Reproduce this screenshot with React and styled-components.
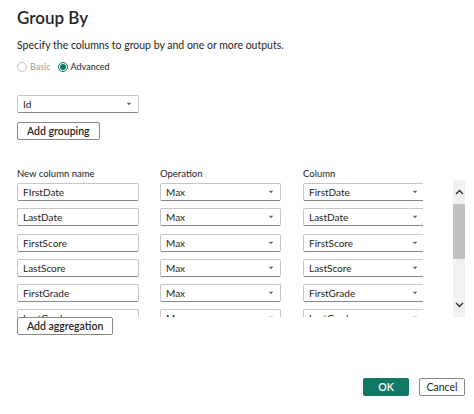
import styled, { createGlobalStyle } from "styled-components";

const GlobalStyle = createGlobalStyle`
  html, body {
    margin: 0;
    padding: 0;
    background: #ffffff;
  }
  body {
    font-family: Lato, "Open Sans", sans-serif;
    color: #252423;
  }
`;

const aggregations = [
  { name: "FIrstDate", column: "FirstDate" },
  { name: "LastDate", column: "LastDate" },
  { name: "FirstScore", column: "FirstScore" },
  { name: "LastScore", column: "LastScore" },
  { name: "FirstGrade", column: "FirstGrade" },
  { name: "LastGrade", column: "LastGrade" },
];

const Caret = () => (
  <svg width="6" height="4" viewBox="0 0 6 4">
    <path d="M0.8 0.8 L5.2 0.8 L3 3.2 Z" fill="#605e5c" />
  </svg>
);

const Chevron = ({ up }) => (
  <svg width="9" height="6" viewBox="0 0 9 6">
    <path
      d={up ? "M1 5 L4.5 1.5 L8 5" : "M1 1 L4.5 4.5 L8 1"}
      fill="none"
      stroke="#333"
      strokeWidth="1.4"
    />
  </svg>
);

const Select = ({ value, width }) => (
  <SelectBox $width={width}>
    <span>{value}</span>
    <Caret />
  </SelectBox>
);

const App = () => {
  return (
    <>
      <GlobalStyle />
      <Dialog>
        <Title>Group By</Title>
        <Description>
          Specify the columns to group by and one or more outputs.
        </Description>
        <RadioGroup>
          <RadioOption $disabled>
            <Radio />
            Basic
          </RadioOption>
          <RadioOption>
            <Radio $checked />
            Advanced
          </RadioOption>
        </RadioGroup>

        <GroupingSection>
          <Select value="Id" width={122} />
          <Button>Add grouping</Button>
        </GroupingSection>

        <Headers>
          <HeaderCell>New column name</HeaderCell>
          <HeaderCell>Operation</HeaderCell>
          <HeaderCell>Column</HeaderCell>
        </Headers>

        <ScrollArea>
          <Rows>
            {aggregations.map(({ name, column }) => (
              <Row key={name}>
                <TextInput>{name}</TextInput>
                <Select value="Max" width={121} />
                <Select value={column} width={122} />
              </Row>
            ))}
          </Rows>
          <Scrollbar>
            <ScrollArrow>
              <Chevron up />
            </ScrollArrow>
            <ScrollTrack>
              <ScrollThumb />
            </ScrollTrack>
            <ScrollArrow>
              <Chevron />
            </ScrollArrow>
          </Scrollbar>
        </ScrollArea>

        <Button>Add aggregation</Button>

        <Footer>
          <PrimaryButton>OK</PrimaryButton>
          <Button $footer>Cancel</Button>
        </Footer>
      </Dialog>
    </>
  );
};

export default App;

const Dialog = styled.div`
  width: 474px;
  height: 414px;
  box-sizing: border-box;
  padding: 6px 9px 0 17px;
  display: flex;
  flex-direction: column;
  align-items: flex-start;
`;

const Title = styled.h1`
  margin: 0;
  font-size: 17px;
  font-weight: 600;
  line-height: 24px;
  color: #252423;
`;

const Description = styled.p`
  margin: 8px 0 0;
  font-size: 10.5px;
  line-height: 14px;
  color: #252423;
`;

const RadioGroup = styled.div`
  display: flex;
  gap: 7px;
  margin-top: 9px;
`;

const RadioOption = styled.label`
  display: flex;
  align-items: center;
  gap: 3px;
  font-size: 9px;
  line-height: 12px;
  color: ${({ $disabled }) => ($disabled ? "#a19f9d" : "#252423")};
`;

const Radio = styled.span`
  width: 10px;
  height: 10px;
  border-radius: 50%;
  box-sizing: border-box;
  border: 1px solid ${({ $checked }) => ($checked ? "#117865" : "#c8c6c4")};
  display: flex;
  align-items: center;
  justify-content: center;

  &::after {
    content: "";
    width: 6px;
    height: 6px;
    border-radius: 50%;
    background: ${({ $checked }) => ($checked ? "#117865" : "transparent")};
  }
`;

const GroupingSection = styled.div`
  display: flex;
  flex-direction: column;
  align-items: flex-start;
  gap: 9px;
  margin-top: 22px;
`;

const fieldBase = `
  height: 18px;
  box-sizing: border-box;
  border: 1px solid #c8c6c4;
  border-bottom-color: #8a8886;
  border-radius: 2px;
  background: #ffffff;
  font-size: 10px;
  color: #252423;
  display: flex;
  align-items: center;
  padding: 0 6px 0 5px;
`;

const SelectBox = styled.div`
  ${fieldBase}
  width: ${({ $width }) => $width}px;
  justify-content: space-between;

  svg {
    flex: none;
  }
`;

const TextInput = styled.div`
  ${fieldBase}
  width: 122px;
`;

const Button = styled.button`
  font-family: inherit;
  height: 18px;
  box-sizing: border-box;
  border: 1px solid #8a8886;
  border-radius: 2px;
  background: #ffffff;
  font-size: 10.5px;
  font-weight: 600;
  color: #252423;
  padding: 0 9px;
  display: flex;
  align-items: center;
  ${({ $footer }) =>
    $footer &&
    `
    width: 46px;
    justify-content: center;
    font-weight: 400;
  `}
`;

const Headers = styled.div`
  display: grid;
  grid-template-columns: 143px 143px 122px;
  margin-top: 27px;
`;

const HeaderCell = styled.span`
  font-size: 9.5px;
  line-height: 13px;
  color: #252423;
`;

const ScrollArea = styled.div`
  display: flex;
  gap: 30px;
  height: 137px;
`;

const Rows = styled.div`
  width: 406px;
  overflow: hidden;
  padding-top: 3px;
  display: flex;
  flex-direction: column;
  gap: 7.3px;
`;

const Row = styled.div`
  display: grid;
  grid-template-columns: 143px 143px 122px;
  flex: none;
`;

const Scrollbar = styled.div`
  width: 12px;
  display: flex;
  flex-direction: column;
  background: #f1f1f1;
`;

const ScrollArrow = styled.div`
  height: 24px;
  display: flex;
  align-items: center;
  justify-content: center;
`;

const ScrollTrack = styled.div`
  flex: 1;
`;

const ScrollThumb = styled.div`
  height: 55px;
  background: #c1c1c1;
`;

const Footer = styled.div`
  align-self: flex-end;
  display: flex;
  gap: 10px;
  margin-top: 43px;
`;

const PrimaryButton = styled.button`
  font-family: inherit;
  width: 46px;
  height: 18px;
  border: none;
  border-radius: 2px;
  background: #117865;
  color: #ffffff;
  font-size: 10.5px;
  font-weight: 600;
  display: flex;
  align-items: center;
  justify-content: center;
`;
